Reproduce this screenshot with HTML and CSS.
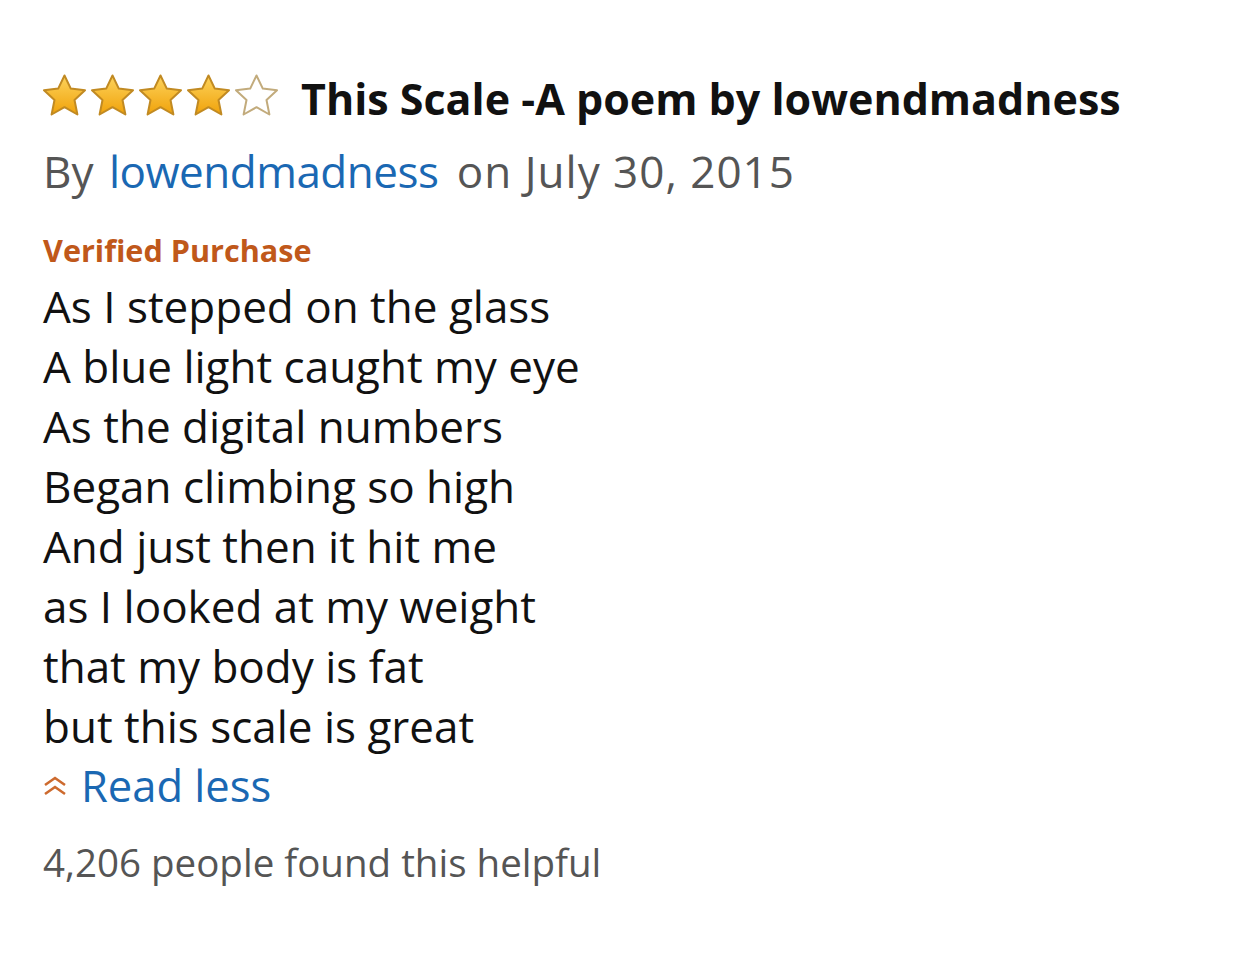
FILE: index.html
```html
<!doctype html>
<html>

<head>
    <title>review</title>
    <meta charset="UTF-8">
    <link rel="stylesheet" href="styles.css">
</head>

<body>
    <div class="review">
        <div class="review-title">
            <span class="stars">
                <svg width="240" height="44" viewBox="0 0 240 44">
                    <defs>
                        <linearGradient id="gold" x1="0" y1="0" x2="0" y2="1">
                            <stop offset="0" stop-color="#fdd35c"/>
                            <stop offset="1" stop-color="#f0a20a"/>
                        </linearGradient>
                        <path id="star" d="M21.5 1.5 L27.8 14.6 L42 16.3 L31.5 26 L34.4 40.5 L21.5 33.2 L8.6 40.5 L11.5 26 L1 16.3 L15.2 14.6 Z"/>
                    </defs>
                    <use href="#star" x="0" fill="url(#gold)" stroke="#c18a22" stroke-width="2" stroke-linejoin="round"/>
                    <use href="#star" x="48" fill="url(#gold)" stroke="#c18a22" stroke-width="2" stroke-linejoin="round"/>
                    <use href="#star" x="96" fill="url(#gold)" stroke="#c18a22" stroke-width="2" stroke-linejoin="round"/>
                    <use href="#star" x="144" fill="url(#gold)" stroke="#c18a22" stroke-width="2" stroke-linejoin="round"/>
                    <use href="#star" x="192" fill="#fff" stroke="#c2ab7c" stroke-width="2" stroke-linejoin="round"/>
                </svg>
            </span>
            <span class="title-text">This Scale -A poem by lowendmadness</span>
        </div>
        <div class="byline">By <a href="#" class="author">lowendmadness</a> <span class="date">on July 30, 2015</span></div>
        <div class="verified">Verified Purchase</div>
        <div class="poem">
            As I stepped on the glass<br>
            A blue light caught my eye<br>
            As the digital numbers<br>
            Began climbing so high<br>
            And just then it hit me<br>
            as I looked at my weight<br>
            that my body is fat<br>
            but this scale is great
        </div>
        <a href="#" class="read-less">
            <svg width="24" height="26" viewBox="0 0 24 26">
                <path d="M2 12 L12 5 L22 12 M2 21 L12 14 L22 21" fill="none" stroke="#cd6a2e" stroke-width="2.6"/>
            </svg>
            Read less
        </a>
        <div class="helpful">4,206 people found this helpful</div>
    </div>
</body>

</html>
```

FILE: styles.css
```css
body {
    margin: 0;
    background-color: #fff;
    font-family: 'Open Sans', 'Noto Sans', sans-serif;
}

a {
    text-decoration: none;
}

.review {
    padding: 74px 0 0 43px;
}

.review-title {
    display: flex;
    align-items: flex-start;
    gap: 18px;
}

.stars svg {
    display: block;
}

.title-text {
    font-size: 43px;
    line-height: 50px;
    font-weight: 700;
    color: #111;
}

.byline {
    font-size: 44px;
    line-height: 60px;
    color: #555;
    margin-top: 17px;
}

.author {
    color: #1a68b3;
    margin: 0 7px 0 4px;
    letter-spacing: -0.5px;
}

.date {
    letter-spacing: 1px;
}

.verified {
    font-size: 30.6px;
    line-height: 36px;
    font-weight: 700;
    color: #c0581a;
    margin-top: 31px;
}

.poem {
    font-size: 44px;
    line-height: 60px;
    color: #111;
    margin-top: 8px;
}

.read-less {
    display: flex;
    align-items: center;
    gap: 14px;
    font-size: 43.5px;
    line-height: 60px;
    color: #1a68b3;
}

.helpful {
    font-size: 38.5px;
    line-height: 50px;
    color: #555;
    margin-top: 21px;
}
```
